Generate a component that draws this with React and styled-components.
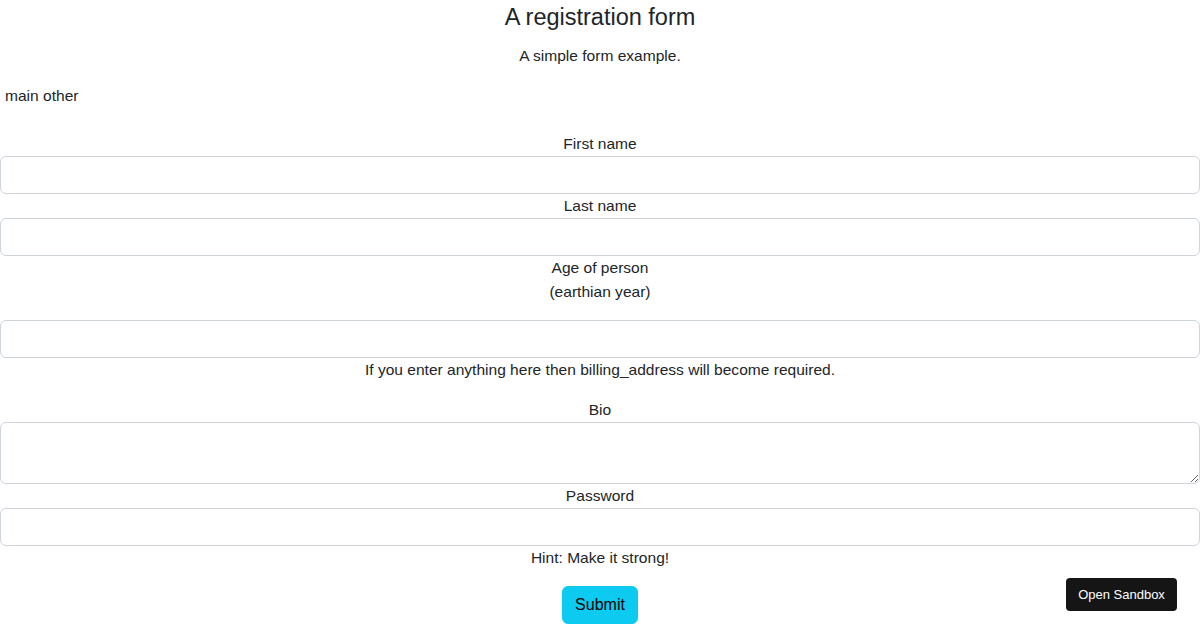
import React from "react";
import styled, { createGlobalStyle } from "styled-components";

const GlobalStyle = createGlobalStyle`
  * { box-sizing: border-box; }
  body {
    margin: 0;
    font-family: "Liberation Sans", Arial, sans-serif;
    font-size: 15.55px;
    line-height: 24px;
    color: #212529;
    background: #fff;
  }
`;

const Page = styled.div`
  display: flex;
  flex-direction: column;
  padding-top: 3px;
`;

const Title = styled.h2`
  margin: 0;
  font-size: 23.5px;
  font-weight: 400;
  line-height: 29px;
  text-align: center;
`;

const Subtitle = styled.p`
  margin: 12px 0 0;
  text-align: center;
`;

const Tabs = styled.div`
  margin-top: 16px;
  padding-left: 5px;
`;

const Form = styled.form`
  display: flex;
  flex-direction: column;
  margin-top: 24px;
`;

const Label = styled.label`
  display: block;
  text-align: center;
`;

const Note = styled.div`
  text-align: center;
  margin-bottom: ${(p) => p.$after || 0}px;
`;

const Input = styled.input`
  display: block;
  width: 100%;
  height: 38px;
  padding: 6px 12px;
  font: inherit;
  color: #212529;
  background: #fff;
  border: 1px solid #ced4da;
  border-radius: 6px;
  margin-top: ${(p) => p.$before || 0}px;
`;

const TextArea = styled.textarea`
  display: block;
  width: 100%;
  height: 62px;
  padding: 6px 12px;
  font: inherit;
  color: #212529;
  background: #fff;
  border: 1px solid #ced4da;
  border-radius: 6px;
`;

const SubmitRow = styled.div`
  display: flex;
  justify-content: center;
  margin-top: 16px;
`;

const SubmitButton = styled.button`
  height: 38px;
  padding: 6px 12px;
  font: inherit;
  font-size: 16px;
  color: #000;
  background: #0dcaf0;
  border: 1px solid #0dcaf0;
  border-radius: 6px;
`;

const SandboxButton = styled.a`
  position: fixed;
  right: 23px;
  bottom: 19px;
  width: 111px;
  height: 33px;
  display: flex;
  align-items: center;
  justify-content: center;
  background: #151515;
  color: #fff;
  font-size: 13px;
  border-radius: 4px;
  text-decoration: none;
`;

export default function App() {
  return (
    <>
      <GlobalStyle />
      <Page>
        <Title>A registration form</Title>
        <Subtitle>A simple form example.</Subtitle>
        <Tabs>main other</Tabs>
        <Form onSubmit={(e) => e.preventDefault()}>
          <Label htmlFor="firstName">First name</Label>
          <Input id="firstName" type="text" />
          <Label htmlFor="lastName">Last name</Label>
          <Input id="lastName" type="text" />
          <Label htmlFor="age">Age of person</Label>
          <Note>(earthian year)</Note>
          <Input id="age" type="number" $before={16} />
          <Note $after={16}>
            If you enter anything here then billing_address will become required.
          </Note>
          <Label htmlFor="bio">Bio</Label>
          <TextArea id="bio" />
          <Label htmlFor="password">Password</Label>
          <Input id="password" type="password" />
          <Note>Hint: Make it strong!</Note>
          <SubmitRow>
            <SubmitButton type="submit">Submit</SubmitButton>
          </SubmitRow>
        </Form>
      </Page>
      <SandboxButton href="#">Open Sandbox</SandboxButton>
    </>
  );
}
